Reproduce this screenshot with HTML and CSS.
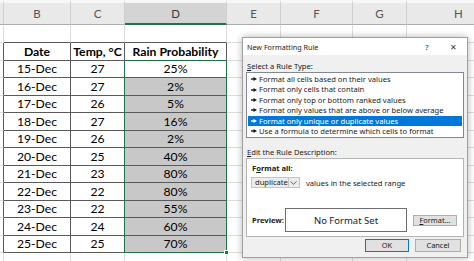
FILE: index.html
```html
<!DOCTYPE html>
<html lang="en">
<head>
    <meta charset="UTF-8">
    <meta name="viewport" content="width=device-width, initial-scale=1.0">
    <title>New Formatting Rule</title>
    <link rel="stylesheet" href="styles.css">
</head>
<body>
    <div class="sheet">
        <div class="grid">
            <!-- column headers -->
            <div class="hd"></div><div class="hd">B</div><div class="hd">C</div><div class="hd sel">D</div><div class="hd">E</div><div class="hd">F</div><div class="hd">G</div><div class="hd">H</div>
            <!-- row 1 -->
            <div class="c"></div><div class="c top"></div><div class="c top"></div><div class="c top"></div><div class="c"></div><div class="c"></div><div class="c"></div><div class="c"></div>
            <!-- table header -->
            <div class="c edge"></div><div class="t b">Date</div><div class="t b">Temp, °C</div><div class="t b gb">Rain Probability</div><div class="c"></div><div class="c"></div><div class="c"></div><div class="c"></div>
            <!-- data -->
            <div class="c edge"></div><div class="t">15-Dec</div><div class="t sl">27</div><div class="t sr">25%</div><div class="c"></div><div class="c"></div><div class="c"></div><div class="c"></div>
            <div class="c edge"></div><div class="t">16-Dec</div><div class="t sl">27</div><div class="t sr g">2%</div><div class="c"></div><div class="c"></div><div class="c"></div><div class="c"></div>
            <div class="c edge"></div><div class="t">17-Dec</div><div class="t sl">26</div><div class="t sr g">5%</div><div class="c"></div><div class="c"></div><div class="c"></div><div class="c"></div>
            <div class="c edge"></div><div class="t">18-Dec</div><div class="t sl">27</div><div class="t sr g">16%</div><div class="c"></div><div class="c"></div><div class="c"></div><div class="c"></div>
            <div class="c edge"></div><div class="t">19-Dec</div><div class="t sl">26</div><div class="t sr g">2%</div><div class="c"></div><div class="c"></div><div class="c"></div><div class="c"></div>
            <div class="c edge"></div><div class="t">20-Dec</div><div class="t sl">25</div><div class="t sr g">40%</div><div class="c"></div><div class="c"></div><div class="c"></div><div class="c"></div>
            <div class="c edge"></div><div class="t">21-Dec</div><div class="t sl">23</div><div class="t sr g">80%</div><div class="c"></div><div class="c"></div><div class="c"></div><div class="c"></div>
            <div class="c edge"></div><div class="t">22-Dec</div><div class="t sl">22</div><div class="t sr g">80%</div><div class="c"></div><div class="c"></div><div class="c"></div><div class="c"></div>
            <div class="c edge"></div><div class="t">23-Dec</div><div class="t sl">22</div><div class="t sr g">55%</div><div class="c"></div><div class="c"></div><div class="c"></div><div class="c"></div>
            <div class="c edge"></div><div class="t">24-Dec</div><div class="t sl">24</div><div class="t sr g">60%</div><div class="c"></div><div class="c"></div><div class="c"></div><div class="c"></div>
            <div class="c edge"></div><div class="t">25-Dec</div><div class="t sl">25</div><div class="t sr g gb handle">70%</div><div class="c"></div><div class="c"></div><div class="c"></div><div class="c"></div>
            <!-- below -->
            <div class="c"></div><div class="c"></div><div class="c"></div><div class="c"></div><div class="c"></div><div class="c"></div><div class="c"></div><div class="c"></div>
        </div>

        <div class="dialog">
            <div class="titlebar">
                <span class="title">New Formatting Rule</span>
                <span class="help">?</span>
                <span class="close">✕</span>
            </div>
            <div class="dialog-body">
                <div class="label"><u>S</u>elect a Rule Type:</div>
                <div class="listbox">
                    <div class="item"><svg class="arrow" width="6" height="4" viewBox="0 0 6 4"><rect x="0" y="1.3" width="3" height="1.4"/><polygon points="2.5,0 6,2 2.5,4"/></svg>Format all cells based on their values</div>
                    <div class="item"><svg class="arrow" width="6" height="4" viewBox="0 0 6 4"><rect x="0" y="1.3" width="3" height="1.4"/><polygon points="2.5,0 6,2 2.5,4"/></svg>Format only cells that contain</div>
                    <div class="item"><svg class="arrow" width="6" height="4" viewBox="0 0 6 4"><rect x="0" y="1.3" width="3" height="1.4"/><polygon points="2.5,0 6,2 2.5,4"/></svg>Format only top or bottom ranked values</div>
                    <div class="item"><svg class="arrow" width="6" height="4" viewBox="0 0 6 4"><rect x="0" y="1.3" width="3" height="1.4"/><polygon points="2.5,0 6,2 2.5,4"/></svg>Format only values that are above or below average</div>
                    <div class="item active"><svg class="arrow" width="6" height="4" viewBox="0 0 6 4"><rect x="0" y="1.3" width="3" height="1.4"/><polygon points="2.5,0 6,2 2.5,4"/></svg>Format only unique or duplicate values</div>
                    <div class="item"><svg class="arrow" width="6" height="4" viewBox="0 0 6 4"><rect x="0" y="1.3" width="3" height="1.4"/><polygon points="2.5,0 6,2 2.5,4"/></svg>Use a formula to determine which cells to format</div>
                </div>
                <div class="label desc-label"><u>E</u>dit the Rule Description:</div>
                <div class="desc">
                    <div class="bold-label">F<u>o</u>rmat all:</div>
                    <div class="combo-row">
                        <div class="combo">
                            <span class="combo-value">duplicate</span>
                            <span class="combo-btn"><svg width="7" height="4" viewBox="0 0 7 4"><polyline points="0.5,0.5 3.5,3.3 6.5,0.5" fill="none" stroke="#555" stroke-width="0.9"/></svg></span>
                        </div>
                        <span class="combo-text">values in the selected range</span>
                    </div>
                    <div class="preview-row">
                        <span class="bold-label preview-label">Preview:</span>
                        <div class="preview">No Format Set</div>
                        <button class="btn format-btn"><u>F</u>ormat...</button>
                    </div>
                </div>
                <div class="buttons">
                    <button class="btn ok">OK</button>
                    <button class="btn cancel">Cancel</button>
                </div>
            </div>
        </div>
    </div>
</body>
</html>
```

FILE: styles.css
```css
body {
    margin: 0;
    padding: 0;
    background-color: #fff;
    overflow: hidden;
}

.sheet {
    position: relative;
    width: 474px;
    height: 261px;
    overflow: hidden;
}

/* spreadsheet grid */
.grid {
    display: grid;
    grid-template-columns: 4px 67px 54px 102px 54px 72px 54px 104px;
    grid-template-rows: 25px 18px repeat(6, 18px 17px) 20px;
    font-family: Lato, "Open Sans", sans-serif;
    font-size: 12.2px;
    color: #000;
}

.grid > div {
    box-sizing: border-box;
    display: flex;
    align-items: center;
    justify-content: center;
    padding-top: 1px;
    line-height: 1;
    white-space: nowrap;
}

.hd {
    background-color: #e9e9e9;
    border-top: 3px solid #f7f7f7;
    border-right: 1px solid #cfcfcf;
    border-bottom: 1px solid #ababab;
    color: #555;
    font-size: 11.5px;
}

.hd.sel {
    background-color: #d4d4d4;
    border-bottom: 2px solid #217346;
    color: #3a3a3a;
}

.c {
    border-right: 1px solid #dcdcdc;
    border-bottom: 1px solid #dcdcdc;
}

.c.top {
    border-bottom-color: #5a5a5a;
}

.c.edge {
    border-right-color: #5a5a5a;
}

.t {
    border-right: 1px solid #5a5a5a;
    border-bottom: 1px solid #5a5a5a;
}

.b {
    font-weight: bold;
}

.t.gb {
    border-bottom-color: #217346;
}

.t.sl {
    border-right-color: #217346;
}

.t.sr {
    border-right-color: #217346;
}

.t.g {
    background-color: #c8c8c8;
}

.handle {
    position: relative;
}

.handle::after {
    content: "";
    position: absolute;
    right: -3px;
    bottom: -3px;
    width: 3px;
    height: 3px;
    background-color: #217346;
    border: 1px solid #fff;
}

/* dialog */
.dialog {
    position: absolute;
    left: 242px;
    top: 37px;
    width: 226px;
    height: 221px;
    box-sizing: border-box;
    background-color: #f0f0f0;
    border: 1px solid #a0a0a0;
    box-shadow: 0 0 7px rgba(0, 0, 0, 0.3);
    font-family: "Noto Sans", "Open Sans", sans-serif;
    font-size: 7.6px;
    color: #1a1a1a;
    display: flex;
    flex-direction: column;
}

.titlebar {
    height: 17px;
    background-color: #fff;
    display: flex;
    align-items: center;
    padding-left: 4px;
    flex-shrink: 0;
}

.title {
    font-size: 7.2px;
    flex: 1;
}

.help {
    width: 24px;
    text-align: center;
    font-size: 7.5px;
}

.close {
    width: 28px;
    text-align: center;
    font-size: 7.5px;
    color: #333;
}

.dialog-body {
    padding: 0 3px;
    display: flex;
    flex-direction: column;
}

.label {
    height: 10px;
    line-height: 10px;
    margin-top: 6px;
    padding-left: 1px;
}

.listbox {
    margin-top: 1px;
    border: 1px solid #828790;
    background-color: #fff;
    padding: 1px;
}

.item {
    height: 10.4px;
    line-height: 10.4px;
    display: flex;
    align-items: center;
    padding-left: 3px;
    white-space: nowrap;
}

.item.active {
    background-color: #0078d7;
    color: #fff;
}

.arrow {
    fill: currentColor;
    margin-right: 2px;
    flex-shrink: 0;
}

.desc-label {
    margin-top: 9px;
}

.desc {
    margin-top: 1px;
    height: 79px;
    box-sizing: border-box;
    border: 1px solid #b4b4b4;
    background-color: #fff;
    padding: 4px 4px;
    display: flex;
    flex-direction: column;
}

.bold-label {
    font-weight: bold;
    padding-left: 1px;
    line-height: 10px;
}

.combo-row {
    margin-top: 4px;
    display: flex;
    align-items: center;
}

.combo {
    width: 49px;
    height: 11px;
    box-sizing: border-box;
    border: 1px solid #c4c4c4;
    background-color: #ececec;
    display: flex;
    align-items: center;
}

.combo-value {
    flex: 1;
    padding-left: 3px;
    line-height: 9px;
}

.combo-btn {
    width: 11px;
    height: 9px;
    border-left: 1px solid #c4c4c4;
    display: flex;
    align-items: center;
    justify-content: center;
}

.combo-text {
    margin-left: 6px;
}

.preview-row {
    margin-top: 20px;
    display: flex;
    align-items: center;
}

.preview-label {
    width: 33px;
}

.preview {
    width: 122px;
    height: 24px;
    box-sizing: border-box;
    border: 1px solid #6e6e6e;
    background-color: #fff;
    display: flex;
    align-items: center;
    justify-content: center;
    font-size: 9.5px;
}

.btn {
    font-family: "Noto Sans", "Open Sans", sans-serif;
    font-size: 7.4px;
    color: #1a1a1a;
    background-color: #e1e1e1;
    border: 1px solid #adadad;
    padding: 0;
    line-height: 1;
}

.format-btn {
    margin-left: 6px;
    width: 44px;
    height: 11px;
}

.buttons {
    margin-top: 2px;
    display: flex;
    justify-content: flex-end;
    gap: 6px;
    padding-right: 3px;
}

.ok {
    width: 44px;
    height: 13px;
    border-color: #0078d7;
}

.cancel {
    width: 46px;
    height: 13px;
}
```
